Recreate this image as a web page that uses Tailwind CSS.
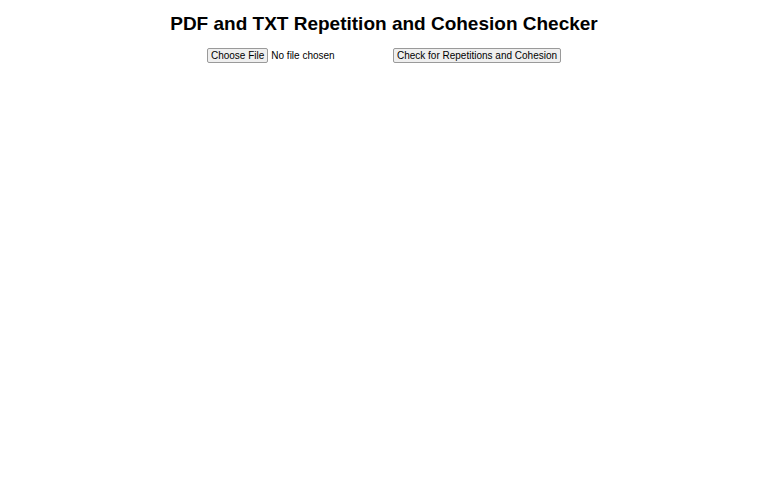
<!DOCTYPE html>
<html lang="en">
<head>
  <meta charset="UTF-8" />
  <meta name="viewport" content="width=device-width, initial-scale=1.0"/>
  <title>PDF and TXT Repetition and Cohesion Checker</title>
  <script src="https://cdn.jsdelivr.net/npm/@tailwindcss/browser@4"></script>
</head>
<body class="bg-white text-black font-['Liberation_Sans',Arial,sans-serif]">

  <main class="px-2 pt-3">
    <h1 class="text-[19px] leading-6 font-bold text-center">PDF and TXT Repetition and Cohesion Checker</h1>

    <form id="checkForm" class="mt-3 flex justify-center gap-0.5 text-[10px] leading-[13px]">
      <input type="file" id="fileInput" accept=".pdf,.txt" aria-label="PDF or TXT file"
        class="w-[184px] file:mr-[3px] file:px-[3px] file:rounded-[2px] file:border file:border-[#9a9a9a] file:bg-[#efefef]"/>
      <button type="submit"
        class="px-[3px] rounded-[2px] border border-[#9a9a9a] bg-[#efefef]">Check for Repetitions and Cohesion</button>
    </form>

    <div id="output" class="mt-3"></div>
  </main>

  <script>
    const form = document.getElementById('checkForm');
    const fileInput = document.getElementById('fileInput');
    const output = document.getElementById('output');

    form.addEventListener('submit', (e) => {
      e.preventDefault();
      if (!fileInput.files.length) {
        output.textContent = 'Please choose a PDF or TXT file.';
      }
    });
  </script>
</body>
</html>
